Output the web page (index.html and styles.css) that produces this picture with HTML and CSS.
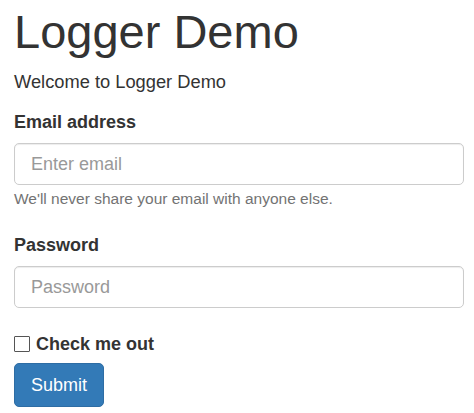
FILE: index.html
```html
<!DOCTYPE html>
<html lang="en">
<head>
<meta charset="utf-8">
<title>Logger Demo</title>
<link rel="stylesheet" href="styles.css">
</head>
<body>
<div class="container">
  <h1 class="title">Logger Demo</h1>
  <p class="lead">Welcome to Logger Demo</p>
  <form class="form">
    <div class="group">
      <label class="label" for="email">Email address</label>
      <input class="field" id="email" type="email" placeholder="Enter email">
      <small class="help">We'll never share your email with anyone else.</small>
    </div>
    <div class="group">
      <label class="label" for="pw">Password</label>
      <input class="field" id="pw" type="password" placeholder="Password">
    </div>
    <label class="check">
      <input class="box" type="checkbox">
      <span>Check me out</span>
    </label>
    <button class="btn" type="button">Submit</button>
  </form>
</div>
</body>
</html>
```
FILE: styles.css
```css
html, body {
  margin: 0;
  padding: 0;
  background: #fff;
}
body {
  font-family: "Liberation Sans", Arial, Helvetica, sans-serif;
  color: #333;
  font-size: 18px;
  line-height: 24px;
}
.container {
  padding: 6px 10px 0 14px;
}
.title {
  font-size: 47px;
  line-height: 52px;
  font-weight: 400;
  margin: 0 0 12px 0;
}
.lead {
  font-size: 18.3px;
  margin: 0 0 16px 0;
}
.form {
  display: flex;
  flex-direction: column;
}
.group {
  display: flex;
  flex-direction: column;
  margin-bottom: 24px;
}
.label {
  font-weight: 700;
  margin-bottom: 9px;
}
.field {
  box-sizing: border-box;
  height: 42px;
  width: 100%;
  margin: 0;
  padding: 0 16px;
  border: 1px solid #ccc;
  border-radius: 5px;
  box-shadow: inset 0 1px 1px rgba(0,0,0,.075);
  font-family: inherit;
  font-size: 18px;
  color: #555;
  background: #fff;
}
.field::placeholder {
  color: #999;
}
.help {
  display: block;
  margin-top: 4px;
  font-size: 15.5px;
  line-height: 20px;
  color: #737373;
}
.check {
  display: flex;
  align-items: center;
  gap: 6px;
  font-weight: 700;
  margin-bottom: 7px;
}
.box {
  appearance: none;
  -webkit-appearance: none;
  box-sizing: border-box;
  width: 16px;
  height: 16px;
  margin: 0;
  border: 1px solid #555;
  border-radius: 1px;
  background: #fff;
}
.btn {
  align-self: flex-start;
  box-sizing: border-box;
  height: 44px;
  width: 90px;
  padding: 0;
  border: 1px solid #2e6da4;
  border-radius: 5px;
  background: #337ab7;
  color: #fff;
  font-family: inherit;
  font-size: 18px;
  line-height: 24px;
}
```
